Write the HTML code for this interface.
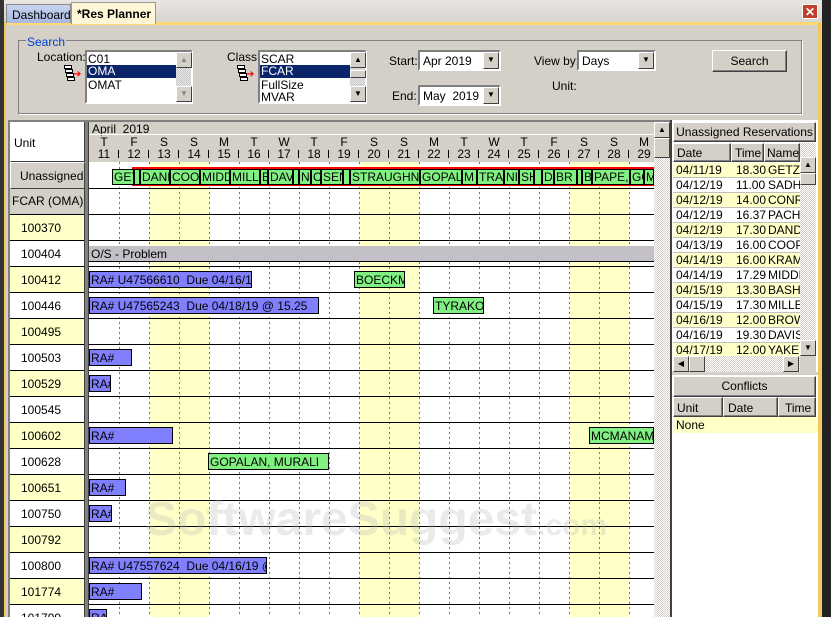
<!DOCTYPE html>
<html style="overflow:hidden;width:831px;height:617px"><head><meta charset="utf-8"><style>
*{box-sizing:border-box;margin:0;padding:0}
body{width:831px;height:617px;overflow:hidden;background:#d4d0c8;font-family:"Liberation Sans",sans-serif;font-size:11px;color:#000;position:relative}
.a{position:absolute}
.t{white-space:nowrap;overflow:hidden}
.lb{background:#fff;border:2px inset #888;border-style:solid;border-color:#808080 #fff #fff #808080}
.btn{background:#d4d0c8;border:1px solid;border-color:#fff #404040 #404040 #fff;box-shadow:inset -1px -1px #808080}
.bl{background:#8080ff;border:1px solid #000;height:17px;padding-left:1px;line-height:16px;font-size:12px}
.gr{background:#80f080;border:1px solid #000;height:17px;padding-left:1px;line-height:16px;font-size:12px}
.cb{background:#d4d0c8;border:1px solid;border-color:#fff #404040 #404040 #fff;width:16px;height:16px;font-size:8px;text-align:center;line-height:14px}
.ic{width:16px;height:18px}
.ic i{position:absolute;width:8px;height:4px;border:1px solid #000;background:#fff}
</style></head><body>
<div class="a" style="left:0;top:0;width:822px;height:23px;background:linear-gradient(#e8e6e2,#d8d5cf)"></div>
<div class="a" style="left:822px;top:0;width:9px;height:617px;background:#222"></div>
<div class="a" style="left:818px;top:22px;width:3px;height:595px;background:#f0c860"></div>
<div class="a" style="left:0;top:0;width:4px;height:617px;background:#333"></div>
<div class="a" style="left:4px;top:22px;width:2px;height:595px;background:#f0c860"></div>
<div class="a" style="left:6px;top:22px;width:812px;height:3px;background:#ffd870"></div>
<div class="a t" style="left:6px;top:4px;width:65px;height:19px;background:linear-gradient(#c8d4f0,#a8b8e0);border:1px solid #888;border-bottom:none;font-size:12px;padding:3px 0 0 5px">Dashboard</div>
<div class="a t" style="left:71px;top:2px;width:85px;height:22px;background:#fff6d8;border:1px solid #999;border-bottom:none;font-size:12px;font-weight:bold;padding:4px 0 0 5px">*Res Planner</div>
<div class="a" style="left:802px;top:4px;width:16px;height:15px;background:#c04030;color:#fff;font-weight:bold;font-size:12px;text-align:center;line-height:15px;border:1px solid #fff">✕</div>
<div class="a" style="left:18px;top:40px;width:784px;height:74px;border:1px solid #808080;box-shadow:1px 1px #fff"></div>
<div class="a" style="left:26px;top:35px;background:#d4d0c8;color:#0040d0;font-size:12px;padding:0 1px">Search</div>
<div class="a" style="left:37px;top:50px;font-size:12px">Location:</div>
<div class="a ic" style="left:64px;top:65px"><i style="left:0;top:0"></i><i style="left:1px;top:4px"></i><i style="left:2px;top:8px"></i><i style="left:3px;top:12px"></i><span class="a" style="left:9px;top:4px;color:red;font-size:10px">➔</span></div>
<div class="a lb" style="left:85px;top:50px;width:108px;height:54px"></div>
<div class="a t" style="left:88px;top:52px;font-size:12px">C01</div>
<div class="a t" style="left:87px;top:65px;width:89px;height:13px;background:#0a246a;color:#fff;font-size:12px;line-height:13px;padding-left:1px">OMA</div>
<div class="a t" style="left:88px;top:78px;font-size:12px">OMAT</div>
<div class="a" style="left:176px;top:52px;width:15px;height:50px;background:repeating-conic-gradient(#e8e8e8 0 25%,#c8c8c8 0 50%) 0 0/2px 2px"></div>
<div class="a cb" style="left:176px;top:52px;color:#888">▲</div><div class="a cb" style="left:176px;top:86px;color:#888">▼</div>
<div class="a" style="left:227px;top:50px;font-size:12px">Class:</div>
<div class="a ic" style="left:237px;top:65px"><i style="left:0;top:0"></i><i style="left:1px;top:4px"></i><i style="left:2px;top:8px"></i><i style="left:3px;top:12px"></i><span class="a" style="left:9px;top:4px;color:red;font-size:10px">➔</span></div>
<div class="a lb" style="left:258px;top:50px;width:109px;height:54px"></div>
<div class="a t" style="left:261px;top:52px;font-size:12px">SCAR</div>
<div class="a t" style="left:260px;top:65px;width:90px;height:13px;background:#0a246a;color:#fff;font-size:12px;line-height:13px;padding-left:1px">FCAR</div>
<div class="a t" style="left:261px;top:78px;font-size:12px">FullSize</div>
<div class="a t" style="left:261px;top:90px;font-size:12px">MVAR</div>
<div class="a" style="left:350px;top:52px;width:15px;height:50px;background:repeating-conic-gradient(#e8e8e8 0 25%,#c8c8c8 0 50%) 0 0/2px 2px"></div>
<div class="a cb" style="left:350px;top:52px">▲</div><div class="a cb" style="left:350px;top:70px;height:8px"></div><div class="a cb" style="left:350px;top:86px">▼</div>
<div class="a" style="left:389px;top:54px;font-size:12px">Start:</div>
<div class="a lb" style="left:418px;top:50px;width:83px;height:21px;font-size:12px;padding:2px 0 0 3px">Apr 2019</div>
<div class="a cb" style="left:483px;top:52px;height:17px">▼</div>
<div class="a" style="left:392px;top:89px;font-size:12px">End:</div>
<div class="a lb" style="left:418px;top:85px;width:83px;height:21px;font-size:12px;padding:2px 0 0 3px">May&nbsp; 2019</div>
<div class="a cb" style="left:483px;top:87px;height:17px">▼</div>
<div class="a" style="left:534px;top:54px;font-size:12px">View by:</div>
<div class="a lb" style="left:577px;top:50px;width:79px;height:21px;font-size:12px;padding:2px 0 0 3px">Days</div>
<div class="a cb" style="left:638px;top:52px;height:17px">▼</div>
<div class="a" style="left:552px;top:79px;font-size:12px">Unit:</div>
<div class="a btn" style="left:712px;top:50px;width:75px;height:22px;font-size:12px;text-align:center;line-height:20px">Search</div>
<div class="a" style="left:8px;top:120px;width:662px;height:497px;background:#fff;border-top:2px solid #808080;border-left:2px solid #808080"></div>
<div class="a" style="left:10px;top:122px;width:75px;height:40px;border:1px solid;border-color:#fff #404040 #404040 #fff;font-size:12px;padding:13px 0 0 3px">Unit</div>
<div class="a" style="left:84px;top:122px;width:5px;height:495px;background:#808080;border-left:1px solid #404040;border-right:1px solid #404040"></div>
<div class="a" style="left:89px;top:122px;width:565px;height:40px;background:#d4d0c8"></div>
<div class="a" style="left:92px;top:122px;font-size:12px">April&nbsp; 2019</div>
<div class="a" style="left:89px;top:134px;width:565px;height:1px;background:#fff"></div>
<div id="hd"></div>
<div id="grid"></div>
<div class="a" style="left:654px;top:122px;width:16px;height:495px;background:repeating-conic-gradient(#fff 0 25%,#d4d0c8 0 50%) 0 0/2px 2px"></div>
<div class="a cb" style="left:654px;top:122px">▲</div><div class="a cb" style="left:654px;top:138px;height:20px"></div>
<div class="a" style="left:670px;top:120px;width:148px;height:497px;background:#fff;border-left:2px solid #404040"></div>
<div class="a btn" style="left:673px;top:122px;width:143px;height:20px;font-size:12px;text-align:center;line-height:18px">Unassigned Reservations</div>
<div class="a btn t" style="left:673px;top:143px;width:58px;height:19px;font-size:12px;padding:2px 3px">Date</div>
<div class="a btn t" style="left:731px;top:143px;width:33px;height:19px;font-size:12px;padding:2px 3px;text-align:right">Time</div>
<div class="a btn t" style="left:764px;top:143px;width:36px;height:19px;font-size:12px;padding:2px 2px">Name</div>
<div id="ur"></div>
<div class="a" style="left:800px;top:143px;width:16px;height:214px;background:repeating-conic-gradient(#fff 0 25%,#d4d0c8 0 50%) 0 0/2px 2px"></div>
<div class="a cb" style="left:800px;top:157px">▲</div><div class="a cb" style="left:800px;top:173px;height:12px"></div><div class="a cb" style="left:800px;top:340px">▼</div>
<div class="a" style="left:673px;top:356px;width:127px;height:16px;background:repeating-conic-gradient(#fff 0 25%,#d4d0c8 0 50%) 0 0/2px 2px"></div>
<div class="a cb" style="left:673px;top:356px">◀</div><div class="a cb" style="left:689px;top:356px;width:16px"></div><div class="a cb" style="left:783px;top:356px">▶</div>
<div class="a" style="left:800px;top:356px;width:16px;height:16px;background:#d4d0c8"></div>
<div class="a" style="left:672px;top:372px;width:146px;height:3px;background:#d4d0c8"></div>
<div class="a btn" style="left:673px;top:376px;width:143px;height:21px;font-size:12px;text-align:center;line-height:19px">Conflicts</div>
<div class="a btn t" style="left:673px;top:397px;width:50px;height:20px;font-size:12px;padding:3px 3px">Unit</div>
<div class="a btn t" style="left:723px;top:397px;width:55px;height:20px;font-size:12px;padding:3px 4px">Date</div>
<div class="a btn t" style="left:778px;top:397px;width:38px;height:20px;font-size:12px;padding:3px 6px;text-align:right">Time</div>
<div class="a" style="left:673px;top:417px;width:145px;height:16px;background:#ffffc8;font-size:12px;padding:1px 3px">None</div>
<div class="a t" style="left:145px;top:492px;width:560px;font-size:48px;font-weight:bold;color:rgba(180,180,180,.28)">SoftwareSuggest<span style="font-size:30px">.com</span></div>
<script>
var h='',g='',days=['T','F','S','S','M','T','W','T','F','S','S','M','T','W','T','F','S','S','M'];
for(var i=0;i<19;i++){var x=89+i*30;h+='<div class="a" style="left:'+x+'px;top:136px;width:30px;text-align:center;font-size:12px;line-height:12px">'+days[i]+'<br>'+(11+i)+'</div>';
h+='<div class="a" style="left:'+(x+29)+'px;top:150px;width:1px;height:8px;background:#000"></div>';}
document.getElementById('hd').innerHTML=h;
[[149,60],[359,60],[569,60]].forEach(function(w){g+='<div class="a" style="left:'+w[0]+'px;top:162px;width:'+w[1]+'px;height:455px;background:#ffffc8"></div>'});
for(var i=1;i<19;i++){g+='<div class="a" style="left:'+(89+i*30)+'px;top:162px;width:1px;height:455px;background:repeating-linear-gradient(#777 0 2px,transparent 2px 5px)"></div>'}
var rows=['FCAR (OMA)','100370','100404','100412','100446','100495','100503','100529','100545','100602','100628','100651','100750','100792','100800','101774','101799'];
g+='<div class="a" style="left:10px;top:162px;width:75px;height:27px;background:#d4d0c8;border:1px solid;border-color:#fff #404040 #404040 #fff;font-size:12px;padding:6px 0 0 9px">Unassigned</div>';
g+='<div class="a" style="left:89px;top:188px;width:565px;height:1px;background:#000"></div>';
rows.forEach(function(r,i){var y=189+i*26;var bg=i==0?'#d4d0c8':(i%2?'#ffffc8':'#fff');
g+='<div class="a" style="left:10px;top:'+y+'px;width:74px;height:26px;background:'+bg+';border-bottom:1px solid #000;font-size:12px;padding:'+(i==0?5:6)+'px 0 0 '+(i==0?2:11)+'px">'+r+'</div>';
g+='<div class="a" style="left:89px;top:'+(y+25)+'px;width:565px;height:1px;background:#000"></div>';});
function bar(c,x,w,r,t){g+='<div class="a t '+c+'" style="left:'+x+'px;top:'+(189+r*26+4)+'px;width:'+w+'px">'+t+'</div>'}
g+='<div class="a t" style="left:89px;top:246px;width:565px;height:16px;background:#c4c0c8;border-bottom:1px solid #000;font-size:12px;padding-left:2px;line-height:16px">O/S - Problem</div>';
bar('bl',89,163,3,'RA# U47566610&nbsp; Due 04/16/19');bar('gr',354,51,3,'BOECKM.');
bar('bl',89,230,4,'RA# U47565243&nbsp; Due 04/18/19 @ 15.25');bar('gr',433,51,4,'TYRAKOS');
bar('bl',89,43,6,'RA#');bar('bl',89,22,7,'RA#');bar('bl',89,84,9,'RA#');bar('gr',589,65,9,'MCMANAMY');
bar('gr',208,121,10,'GOPALAN, MURALI');bar('bl',89,37,11,'RA#');bar('bl',89,23,12,'RA#');
bar('bl',89,178,14,'RA# U47557624&nbsp; Due 04/16/19 @');bar('bl',89,53,15,'RA#');bar('bl',89,18,16,'RA#');
g+='<div class="a" style="left:132px;top:167px;width:522px;height:19px;border:2px solid #f00"></div>';
var un=[[112,22,'GET'],[134,6,''],[140,30,'DAND'],[170,30,'COOP'],[200,30,'MIDD'],[230,30,'MILL'],[260,8,'B'],[268,25,'DAV'],[293,6,''],[299,12,'NE'],[311,10,'C'],[321,22,'SEN'],[343,7,''],[350,70,'STRAUGHN'],[420,42,'GOPAL'],[462,15,'M'],[477,27,'TRA'],[504,15,'NI'],[519,15,'SH'],[534,8,''],[542,12,'D'],[554,23,'BR'],[577,5,''],[582,10,'BO'],[592,38,'PAPE,'],[630,14,'GO'],[644,10,'M']];
un.forEach(function(u){g+='<div class="a t gr" style="left:'+u[0]+'px;top:169px;width:'+u[1]+'px;height:16px;line-height:15px">'+u[2]+'</div>'});
document.getElementById('grid').innerHTML=g;
var d=[['04/11/19','18.30','GETZ'],['04/12/19','11.00','SADHA'],['04/12/19','14.00','CONRI'],['04/12/19','16.37','PACHE'],['04/12/19','17.30','DANDI'],['04/13/19','16.00','COOPE'],['04/14/19','16.00','KRAMI'],['04/14/19','17.29','MIDDL'],['04/15/19','13.30','BASHA'],['04/15/19','17.30','MILLE'],['04/16/19','12.00','BROW'],['04/16/19','19.30','DAVIS'],['04/17/19','12.00','YAKEL']],s='';
d.forEach(function(r,i){var y=163+i*15;s+='<div class="a t" style="left:673px;top:'+y+'px;width:127px;height:15px;background:'+(i%2?'#fff':'#ffffc8')+';border-bottom:1px solid #c0c0c0;font-size:12px;line-height:14px"><span class="a" style="left:3px">'+r[0]+'</span><span class="a" style="left:63px">'+r[1]+'</span><span class="a" style="left:95px">'+r[2]+'</span></div>'});
document.getElementById('ur').innerHTML=s;
</script>
</body></html>
